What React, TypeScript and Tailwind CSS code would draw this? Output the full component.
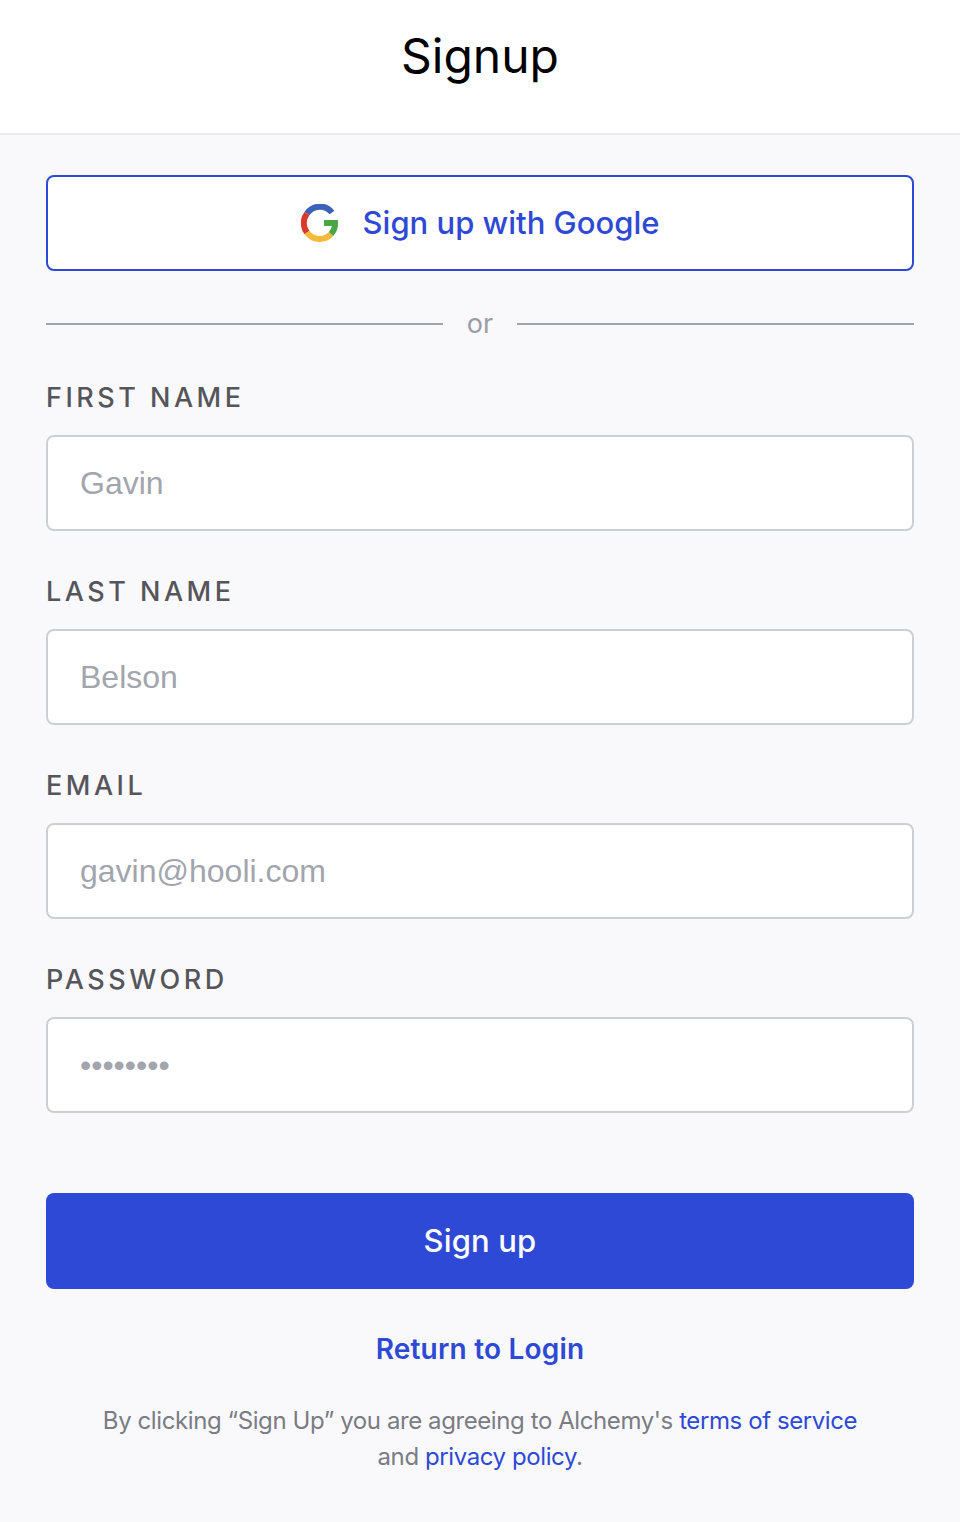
import React from "react";

const fields = [
  { label: "FIRST NAME", placeholder: "Gavin" },
  { label: "LAST NAME", placeholder: "Belson" },
  { label: "EMAIL", placeholder: "gavin@hooli.com" },
  { label: "PASSWORD", placeholder: "••••••••" },
];

export default function App() {
  return (
    <div className="min-h-[1522px] bg-[#f9f9fb] font-['Inter',sans-serif]">
      <header className="h-[135px] bg-white border-b-2 border-[#e9eaec] flex items-center justify-center pb-[22px]">
        <h1 className="text-[48px] leading-[56px] text-black font-normal">Signup</h1>
      </header>
      <main className="px-[46px] pt-[40px]">
        <button className="w-full h-[96px] bg-white border-2 border-[#2e49d5] rounded-[8px] flex items-center justify-center gap-[25px] text-[#2e49d5] text-[31px] font-medium">
          <svg width="37" height="38" viewBox="0 0 37 38" fill="none" strokeWidth="6">
            <path d="M31 8.5A15.5 15.5 0 0 0 6 9.5" stroke="#3b62b8" />
            <path d="M6 9.5A15.5 15.5 0 0 0 6 28.5" stroke="#d93a2b" />
            <path d="M6 28.5A15.5 15.5 0 0 0 30 30" stroke="#f2b93b" />
            <path d="M30 30A15.5 15.5 0 0 0 34 19H23" stroke="#4aa645" />
          </svg>
          <span>Sign up with Google</span>
        </button>
        <div className="flex items-center gap-[24px] mt-[36px] h-[34px]">
          <div className="flex-1 h-[2px] bg-[#a1a4ab]" />
          <span className="text-[27px] leading-[34px] text-[#9a9da5]">or</span>
          <div className="flex-1 h-[2px] bg-[#a1a4ab]" />
        </div>
        <div className="mt-[40px] flex flex-col gap-[44px]">
          {fields.map((f) => (
            <label key={f.label} className="block">
              <span className="block text-[27px] leading-[34px] font-medium tracking-[3.5px] text-[#55565c]">{f.label}</span>
              <input
                readOnly
                type="text"
                placeholder={f.placeholder}
                className="mt-[20px] block w-full h-[96px] bg-white border-2 border-[#ccd0d6] rounded-[8px] px-[32px] text-[32px] font-['Liberation_Sans',sans-serif] placeholder:text-[#a2a5ad] outline-none"
              />
            </label>
          ))}
        </div>
        <button className="mt-[80px] w-full h-[96px] bg-[#2e49d5] rounded-[8px] text-white text-[31px] font-medium tracking-[0.15px]">Sign up</button>
        <p className="mt-[42px] text-center text-[28px] leading-[36px] font-semibold text-[#2e49d5] tracking-[0.2px]">Return to Login</p>
        <p className="mt-[36px] text-center text-[24px] leading-[36px] text-[#7a7c84] tracking-[-0.41px]">
          By clicking “Sign Up” you are agreeing to Alchemy's <span className="text-[#2e49d5]">terms of service</span>
          <br />
          and <span className="text-[#2e49d5]">privacy policy</span>.
        </p>
      </main>
    </div>
  );
}
